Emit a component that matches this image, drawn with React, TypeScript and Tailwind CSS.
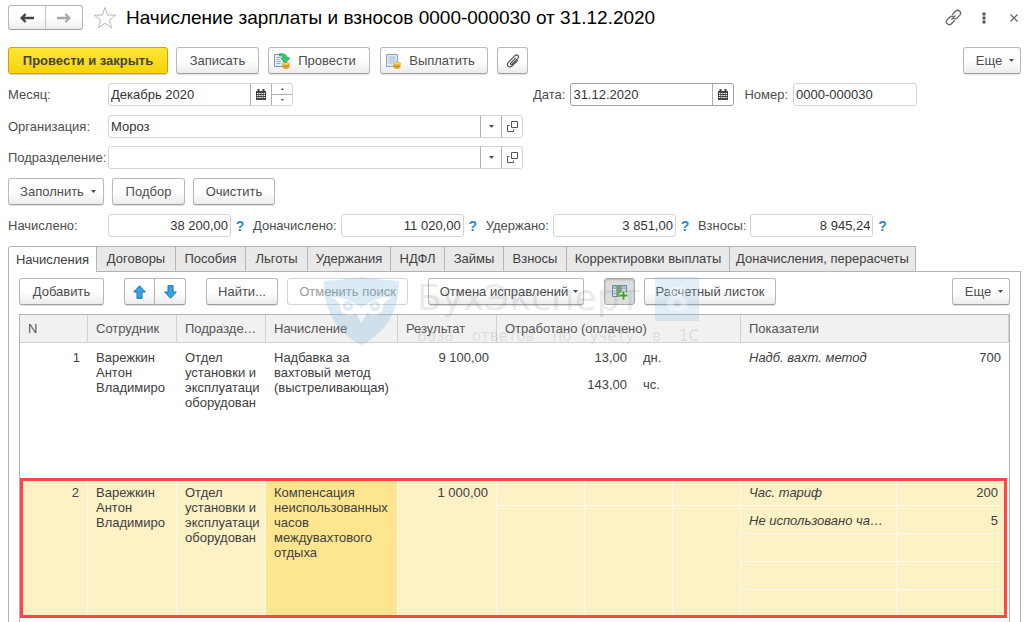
import type { ReactNode } from 'react';
import clsx from 'clsx';

const raised =
  'flex h-[27px] shrink-0 items-center justify-center whitespace-nowrap rounded-[3px] border border-[#b9b9b9] border-b-[#a0a0a0] bg-linear-to-b from-white from-50% to-[#ececec] text-[#4d4d4d] shadow-[0_1px_1px_rgba(0,0,0,0.12)]';

const tabs = [
  { title: 'Начисления', width: 'w-[89px]' },
  { title: 'Договоры', width: 'w-[79px]' },
  { title: 'Пособия', width: 'w-[70px]' },
  { title: 'Льготы', width: 'w-[62px]' },
  { title: 'Удержания', width: 'w-[83px]' },
  { title: 'НДФЛ', width: 'w-[54px]' },
  { title: 'Займы', width: 'w-[59px]' },
  { title: 'Взносы', width: 'w-[63px]' },
  { title: 'Корректировки выплаты', width: 'w-[163px]' },
  { title: 'Доначисления, перерасчеты', width: 'w-[186px]' },
];

const totals = [
  { id: 'accrued', label: 'Начислено:', value: '38 200,00' },
  { id: 'extra', label: 'Доначислено:', value: '11 020,00' },
  { id: 'withheld', label: 'Удержано:', value: '3 851,00' },
  { id: 'contributions', label: 'Взносы:', value: '8 945,24' },
];

type Accrual = {
  n: number;
  employee: string[];
  department: string[];
  accrual: string[];
  result: string;
  worked: { value: string; unit: string }[];
  indicators: { name: string; value: string }[];
  selected?: boolean;
};

const accruals: Accrual[] = [
  {
    n: 1,
    employee: ['Варежкин', 'Антон', 'Владимиро'],
    department: ['Отдел', 'установки и', 'эксплуатаци', 'оборудован'],
    accrual: ['Надбавка за', 'вахтовый метод', '(выстреливающая)'],
    result: '9 100,00',
    worked: [
      { value: '13,00', unit: 'дн.' },
      { value: '143,00', unit: 'чс.' },
    ],
    indicators: [{ name: 'Надб. вахт. метод', value: '700' }],
  },
  {
    n: 2,
    employee: ['Варежкин', 'Антон', 'Владимиро'],
    department: ['Отдел', 'установки и', 'эксплуатаци', 'оборудован'],
    accrual: ['Компенсация', 'неиспользованных', 'часов', 'междувахтового', 'отдыха'],
    result: '1 000,00',
    worked: [],
    indicators: [
      { name: 'Час. тариф', value: '200' },
      { name: 'Не использовано часов', value: '5' },
    ],
    selected: true,
  },
];

function Caret({ className = 'h-[3px] w-[5px]' }: { className?: string }) {
  return (
    <svg viewBox="0 0 5 3" className={clsx('shrink-0', className)} fill="#4d4d4d" aria-hidden="true">
      <path d="M0 0h5L2.5 3z" />
    </svg>
  );
}

function ArrowIcon({ color, className }: { color: string; className?: string }) {
  return (
    <svg viewBox="0 0 14 10" className={clsx('h-[10px] w-[14px]', className)} fill="none" stroke={color} strokeWidth="2.4" aria-hidden="true">
      <path d="M14 5H2M5.6 1L1.6 5l4 4" />
    </svg>
  );
}

function BlueArrow({ className }: { className?: string }) {
  return (
    <svg viewBox="0 0 13 14" className={clsx('h-[14px] w-[13px]', className)} aria-hidden="true">
      <path d="M6.5 .8L12.300 7H9v6.300H4V7H.7z" fill="#36a3e6" stroke="#1d6fa8" strokeLinejoin="round" />
    </svg>
  );
}

function CalendarIcon() {
  return (
    <svg viewBox="0 0 10 11" className="h-[11px] w-[10px]" aria-hidden="true">
      <path d="M0 2h1.5V0h2v2h3V0h2v2H10v9H0z" fill="#444" />
      <path d="M1 4.5h8M1 6.5h8M1 8.5h8" stroke="#fff" strokeWidth="1.2" strokeDasharray="1.4 .8" />
    </svg>
  );
}

function OpenIcon() {
  return (
    <svg viewBox="0 0 11 11" className="h-[11px] w-[11px]" fill="none" stroke="#555" aria-hidden="true">
      <path d="M4.5.5h6v6h-6z" />
      <path d="M2.5 4.5h-2v6h6v-2" />
    </svg>
  );
}

function Coins() {
  return (
    <>
      <path d="M8.500 10.500v4c0 .8 1.500 1.400 3.500 1.400s3.500-.6 3.500-1.400v-4z" fill="#e3ab26" />
      <path d="M8.500 12.500c.6.8 1.900 1.200 3.500 1.200s2.900-.4 3.500-1.200" stroke="#b57d10" strokeWidth=".6" fill="none" />
      <ellipse cx="12" cy="10.600" rx="3.500" ry="1.500" fill="#f9d662" stroke="#c8901a" strokeWidth=".5" />
    </>
  );
}

function PostIcon() {
  return (
    <svg viewBox="0 0 16 16" className="h-4 w-4" aria-hidden="true">
      <path d="M.5 1.500h9v12h-9z" fill="#e6eef4" stroke="#7e95a6" />
      <path d="M2.500 4.500h4M2.500 6.500h3M2.500 8.500h4M2.500 10.500h4" stroke="#8aa2b5" strokeWidth=".9" />
      <Coins />
      <path d="M5.500 .8c4.500-.6 7.500 .8 7.800 4.200h2.500L11.500 10 7 5h2.800C9.600 3.400 8.500 2.800 5.500 2.800z" fill="#2fcf6f" stroke="#129548" strokeWidth=".7" />
    </svg>
  );
}

function PayIcon() {
  return (
    <svg viewBox="0 0 16 16" className="h-4 w-4" aria-hidden="true">
      <path d="M1.500 1.500h11v12h-11z" fill="#dfeaf3" stroke="#8aa5bb" />
      <path d="M3.500 4h7M3.500 6h7M3.500 8h7M3.500 10h4" stroke="#9bb6cb" strokeWidth=".9" />
      <Coins />
    </svg>
  );
}

function PaperclipIcon() {
  return (
    <svg viewBox="0 0 14 14" className="h-[14px] w-[14px]" fill="none" stroke="#555" strokeWidth="1.200" strokeLinecap="round" aria-hidden="true">
      <path d="M9.500 4.200L4.900 9c-.9 1 .3 2.100 1.300 1.200l5.600-5.800c2-2.200-.8-4.700-2.900-2.700L2.300 8.300c-2.500 2.700.9 6.200 3.700 3.700l5.700-5.700" />
    </svg>
  );
}

function ColumnsIcon() {
  return (
    <svg viewBox="0 0 17 16" className="h-4 w-[17px]" aria-hidden="true">
      <path d="M1.500 1.500h14v11h-14z" fill="#e8f1f6" stroke="#6d8ea3" />
      <path d="M2 2h13v2H2z" fill="#a9c4d6" />
      <path d="M6 2h4v10.500H6z" fill="#6cb33f" />
      <path d="M5.500 1.500v11M10.500 1.500v11M2 4.500h13M2 7h13M2 9.500h13" stroke="#7796a9" strokeWidth=".8" />
      <path d="M12.500 7v8M8.500 11h8" stroke="#fff" strokeWidth="3.600" />
      <path d="M12.500 7.500v8M8.500 11.500h8" stroke="#3fa21c" strokeWidth="2.200" />
    </svg>
  );
}

function LinkIcon() {
  return (
    <svg viewBox="0 0 17 17" className="h-[17px] w-[17px]" fill="none" stroke="#666" strokeWidth="1.300" strokeLinecap="round" aria-hidden="true">
      <path d="M7.600 5.200l2.900-2.900c1.200-1.200 3-1.200 4.200-.1 1.100 1.200 1.100 3 0 4.200l-2.600 2.600c-.9.900-2.200 1.100-3.300.6" />
      <path d="M9.400 11.800l-2.900 2.900c-1.200 1.200-3 1.200-4.200.1-1.100-1.200-1.100-3 0-4.200L4.900 8c.9-.9 2.200-1.100 3.300-.6" />
      <path d="M6.800 10.200l3.400-3.400" />
    </svg>
  );
}

function MoreButton() {
  return (
    <button type="button" className={clsx(raised, 'ml-auto w-[58px] gap-[7px] pl-[6px]')}>
      Еще
      <Caret />
    </button>
  );
}

function Field({
  id,
  label,
  value,
  labelClass,
  boxClass,
  inputClass,
  children,
}: {
  id: string;
  label: string;
  value: string;
  labelClass?: string;
  boxClass?: string;
  inputClass?: string;
  children?: ReactNode;
}) {
  return (
    <>
      <label htmlFor={id} className={clsx('shrink-0 whitespace-nowrap text-[#4d4d4d]', labelClass)}>
        {label}
      </label>
      <div className={clsx('flex h-[23px] overflow-hidden rounded-[3px] border bg-white', boxClass)}>
        <input id={id} defaultValue={value} className={clsx('min-w-0 flex-1 px-[2px] text-[#333] outline-none', inputClass)} />
        {children}
      </div>
    </>
  );
}

const addon = 'flex w-[21px] shrink-0 items-center justify-center border-l border-[#b0b0b0]';

function ReferenceField({ id, label, value }: { id: string; label: string; value: string }) {
  return (
    <div className="flex items-center">
      <Field id={id} label={label} value={value} labelClass="w-[100px]" boxClass="w-[415px] border-[#d4d4d4]">
        <button type="button" aria-label="Выбрать" className={addon}>
          <Caret />
        </button>
        <button type="button" aria-label="Открыть" className={addon}>
          <OpenIcon />
        </button>
      </Field>
    </div>
  );
}

function Lines({ items }: { items: string[] }) {
  return items.map((line) => (
    <span key={line} className="block">
      {line}
    </span>
  ));
}

function Watermark() {
  return (
    <div className="pointer-events-none absolute left-[315px] top-[5px] flex items-start gap-[18px]" aria-hidden="true">
      <svg viewBox="0 0 75 68" className="h-[68px] w-[75px] opacity-25">
        <path d="M37.500 0C50 2 62 3 75 4c0 30-12 51-37.500 64C12 55 0 34 0 4 13 3 25 2 37.500 0z" fill="#6fb1dc" />
        <path d="M6 20c12 0 23 3 31.500 11C46 23 57 20 69 20c-6 3-9 5-10 8 1 9-9 13-16 8l-5.500 10L32 36c-7 5-17 1-16-8-1-3-4-5-10-8z" fill="#fff" />
        <g fill="#6fb1dc">
          <circle cx="24" cy="29" r="5" />
          <circle cx="51" cy="29" r="5" />
        </g>
        <g fill="#fff">
          <circle cx="24" cy="29" r="2" />
          <circle cx="51" cy="29" r="2" />
        </g>
      </svg>
      <div className="w-[282px] font-['DejaVu_Sans'] text-[#50607a]/15">
        <div className="flex h-[46px] items-start justify-between">
          <span className="text-[36px] leading-[42px]">БухЭксперт</span>
          <span className="flex h-11 w-11 items-center justify-center bg-[#6fb1dc]/20 text-[34px] font-bold text-white/40">8</span>
        </div>
        <div className="flex justify-between text-[15px] leading-[26px]">
          <span>База</span>
          <span>ответов</span>
          <span>по</span>
          <span>учету</span>
          <span>в</span>
          <span>1С</span>
        </div>
      </div>
    </div>
  );
}

function AccrualRows({ row }: { row: Accrual }) {
  const cell = clsx('px-2 pt-[7px] align-top leading-[15px]', row.selected && 'border-r border-[#fffaf0] bg-[#fdf1c6]');
  const lined = clsx(cell, row.selected && 'border-b');
  const lines = [0, 1, 2, 3, 4];

  return (
    <tbody className="relative">
      {lines.map((i) => (
        <tr key={i} className={row.selected ? 'h-7' : 'h-[27px]'}>
          {i === 0 && (
            <>
              <td rowSpan={5} className={clsx(cell, 'text-right')}>{row.n}</td>
              <td rowSpan={5} className={cell}><Lines items={row.employee} /></td>
              <td rowSpan={5} className={cell}><Lines items={row.department} /></td>
              <td rowSpan={5} className={clsx(cell, row.selected && 'bg-[#fee58f]')}><Lines items={row.accrual} /></td>
              <td rowSpan={5} className={clsx(cell, 'text-right')}>{row.result}</td>
            </>
          )}
          {i < 2 && (
            <>
              <td rowSpan={i === 1 ? 4 : 1} className={lined} />
              <td rowSpan={i === 1 ? 4 : 1} className={clsx(lined, 'pl-0')}>
                {row.worked[i] && (
                  <div className="flex gap-4">
                    <span className="w-[42px] text-right">{row.worked[i].value}</span>
                    <span>{row.worked[i].unit}</span>
                  </div>
                )}
              </td>
              <td rowSpan={i === 1 ? 4 : 1} className={lined} />
            </>
          )}
          <td className={clsx(lined, 'truncate italic')}>{row.indicators[i]?.name}</td>
          <td className={clsx(lined, 'text-right', row.selected && 'border-r-[3px] border-r-white')}>
            {row.indicators[i]?.value}
            {row.selected && i === 0 && (
              <span className="pointer-events-none absolute inset-y-0 left-0 right-[2px] border-[3px] border-[#ff4545]" />
            )}
          </td>
        </tr>
      ))}
    </tbody>
  );
}

function AccrualTable() {
  const head = 'h-7 truncate border-b border-r border-[#d2d2d2] px-2 text-left font-normal text-[#555]';

  return (
    <div className="flex-1 border-x border-t border-[#b4b4b4]">
      <table className="w-full table-fixed border-separate border-spacing-0 text-[#404040]">
        <colgroup>
          <col className="w-[68px]" />
          <col className="w-[89px]" />
          <col className="w-[89px]" />
          <col className="w-[132px]" />
          <col className="w-[99px]" />
          <col className="w-[88px]" />
          <col className="w-[88px]" />
          <col className="w-[68px]" />
          <col className="w-[156px]" />
          <col />
        </colgroup>
        <thead className="bg-[#f1f1f1]">
          <tr>
            <th className={head}>N</th>
            <th className={head}>Сотрудник</th>
            <th className={head}>Подразделение</th>
            <th className={head}>Начисление</th>
            <th className={head}>Результат</th>
            <th colSpan={3} className={head}>Отработано (оплачено)</th>
            <th colSpan={2} className={head}>Показатели</th>
          </tr>
        </thead>
        {accruals.map((row) => (
          <AccrualRows key={row.n} row={row} />
        ))}
      </table>
    </div>
  );
}

export default function App() {
  return (
    <div className="flex min-h-screen flex-col overflow-hidden bg-white pl-2 pr-[3px] pt-[5px] font-['Liberation_Sans',Arial,sans-serif] text-[13px] leading-4">
      <header className="flex h-[25px] items-center">
        <div className="flex h-[25px] w-[75px] overflow-hidden rounded-[3px] border border-[#b9b9b9] border-b-[#a0a0a0] bg-linear-to-b from-white from-50% to-[#ececec]">
          <button type="button" aria-label="Назад" className="flex flex-1 items-center justify-center border-r border-[#c4c4c4]">
            <ArrowIcon color="#444" />
          </button>
          <button type="button" aria-label="Вперед" className="flex flex-1 items-center justify-center">
            <ArrowIcon color="#a8a8a8" className="rotate-180" />
          </button>
        </div>
        <button type="button" aria-label="В избранное" className="ml-[10px] mr-[9px]">
          <svg viewBox="0 0 24 24" className="h-6 w-6" fill="#fff" stroke="#b3bac2" aria-hidden="true">
            <path d="M12 1.500l2.700 7.500 8 .2-6.300 4.900 2.200 7.700L12 17.300l-6.600 4.500 2.200-7.700L1.300 9.200l8-.2z" />
          </svg>
        </button>
        <h1 className="text-[19px] leading-6 text-black">Начисление зарплаты и взносов 0000-000030 от 31.12.2020</h1>
        <div className="ml-auto flex items-center pr-[3px]">
          <button type="button" aria-label="Получить ссылку">
            <LinkIcon />
          </button>
          <button type="button" aria-label="Меню" className="ml-5">
            <svg viewBox="0 0 4 12" className="h-3 w-1" fill="#555" aria-hidden="true">
              <path d="M.5.500h3v3h-3zM.5 4.500h3v3h-3zM.5 8.500h3v3h-3z" />
            </svg>
          </button>
          <button type="button" aria-label="Закрыть" className="ml-6">
            <svg viewBox="0 0 8 8" className="h-2 w-2" stroke="#666" strokeWidth="1.300" aria-hidden="true">
              <path d="M.5.500l7 7M7.500.500l-7 7" />
            </svg>
          </button>
        </div>
      </header>

      <div className="mt-[17px] flex items-center">
        <button type="button" className="flex h-[27px] w-40 items-center justify-center rounded-[3px] border border-[#c9a800] bg-linear-to-b from-[#ffe633] to-[#f5d400] font-bold text-[#444] shadow-[0_1px_1px_rgba(0,0,0,0.2)]">
          Провести и закрыть
        </button>
        <button type="button" className={clsx(raised, 'ml-2 w-[83px]')}>Записать</button>
        <button type="button" className={clsx(raised, 'ml-[9px] w-[102px] gap-2 pr-2')}>
          <PostIcon />
          Провести
        </button>
        <button type="button" className={clsx(raised, 'ml-[10px] w-[108px] gap-2 pr-2')}>
          <PayIcon />
          Выплатить
        </button>
        <button type="button" aria-label="Файлы" className={clsx(raised, 'ml-[9px] w-[31px]')}>
          <PaperclipIcon />
        </button>
        <MoreButton />
      </div>

      <div className="mt-[9px] flex items-center">
        <Field id="month" label="Месяц:" value="Декабрь 2020" labelClass="w-[100px]" boxClass="w-[185px] border-[#d4d4d4]">
          <button type="button" aria-label="Выбрать месяц" className={addon}>
            <CalendarIcon />
          </button>
          <div className="flex w-[21px] shrink-0 flex-col border-l border-[#b0b0b0]">
            <button type="button" aria-label="Следующий месяц" className="flex flex-1 items-center justify-center border-b border-[#b0b0b0]">
              <Caret className="h-[2px] w-[3px] rotate-180" />
            </button>
            <button type="button" aria-label="Предыдущий месяц" className="flex flex-1 items-center justify-center">
              <Caret className="h-[2px] w-[3px]" />
            </button>
          </div>
        </Field>
        <div className="ml-60 flex items-center">
          <Field id="date" label="Дата:" value="31.12.2020" labelClass="mr-[5px]" boxClass="w-[164px] border-[#a0a0a0]">
            <button type="button" aria-label="Выбрать дату" className={addon}>
              <CalendarIcon />
            </button>
          </Field>
        </div>
        <div className="ml-[10px] flex items-center">
          <Field id="number" label="Номер:" value="0000-000030" labelClass="mr-[5px]" boxClass="w-[124px] border-[#d4d4d4]" />
        </div>
      </div>

      <div className="mt-[9px] flex flex-col gap-2">
        <ReferenceField id="organization" label="Организация:" value="Мороз" />
        <ReferenceField id="department" label="Подразделение:" value="" />
      </div>

      <div className="mt-[9px] flex items-center gap-2">
        <button type="button" className={clsx(raised, 'w-24 gap-[7px] pl-1')}>
          Заполнить
          <Caret />
        </button>
        <button type="button" className={clsx(raised, 'w-[73px]')}>Подбор</button>
        <button type="button" className={clsx(raised, 'w-[82px]')}>Очистить</button>
      </div>

      <div className="mt-[9px] flex items-center">
        {totals.map((total, i) => (
          <div key={total.id} className="mr-2 flex items-center">
            <Field
              id={total.id}
              label={total.label}
              value={total.value}
              labelClass={i === 0 ? 'w-[100px]' : 'mr-1'}
              boxClass="w-[123px] border-[#d4d4d4]"
              inputClass="text-right"
            />
            <button type="button" aria-label={`Подсказка: ${total.label}`} className="ml-1 w-[10px] text-center text-sm font-bold text-[#2a8bcb]">
              ?
            </button>
          </div>
        ))}
      </div>

      <div role="tablist" className="mt-[9px] flex">
        {tabs.map((tab, i) => (
          <button
            key={tab.title}
            type="button"
            role="tab"
            aria-selected={i === 0}
            className={clsx(
              'h-[26px] shrink-0 whitespace-nowrap border-r border-t border-[#b4b4b4] text-center text-[#404040]',
              tab.width,
              i === 0 ? 'rounded-tl-[3px] border-l bg-white' : 'border-b bg-[#e9e9e9]',
            )}
          >
            {tab.title}
          </button>
        ))}
        <div className="flex-1 border-b border-[#b4b4b4]" />
      </div>

      <section className="relative flex flex-1 flex-col border-x border-[#b4b4b4] px-[10px] pt-[6px]">
        <div className="mb-[9px] flex items-center">
          <button type="button" className={clsx(raised, 'w-[85px]')}>Добавить</button>
          <div className="ml-5 flex">
            <button type="button" aria-label="Переместить вверх" className={clsx(raised, 'w-[31px] rounded-r-none')}>
              <BlueArrow />
            </button>
            <button type="button" aria-label="Переместить вниз" className={clsx(raised, 'w-[31px] rounded-l-none border-l-0')}>
              <BlueArrow className="rotate-180" />
            </button>
          </div>
          <button type="button" className={clsx(raised, 'ml-5 w-[72px]')}>Найти...</button>
          <button type="button" disabled className="ml-[9px] flex h-[27px] w-[121px] shrink-0 items-center justify-center rounded-[3px] border border-[#d4d4d4] bg-white text-[#9a9a9a]">
            Отменить поиск
          </button>
          <button type="button" className={clsx(raised, 'ml-5 w-[156px] gap-[5px] pl-[6px]')}>
            Отмена исправлений
            <Caret />
          </button>
          <button type="button" aria-label="Показать колонки" aria-pressed="true" className="ml-5 flex h-[27px] w-[31px] shrink-0 items-center justify-center rounded-[3px] border border-[#a8a8a8] bg-[#dedede] shadow-[inset_0_1px_2px_rgba(0,0,0,0.2)]">
            <ColumnsIcon />
          </button>
          <button type="button" className={clsx(raised, 'ml-[9px] w-[132px]')}>Расчетный листок</button>
          <MoreButton />
        </div>
        <AccrualTable />
        <Watermark />
      </section>
    </div>
  );
}
